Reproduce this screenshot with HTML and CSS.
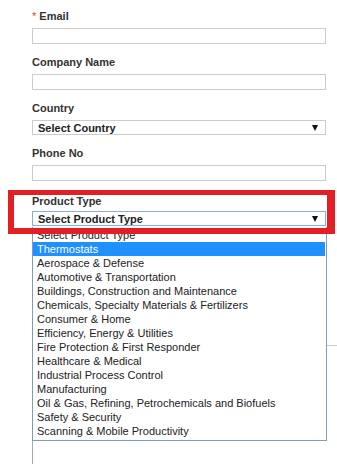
FILE: index.html
```html
<!DOCTYPE html>
<html>
<head>
<meta charset="utf-8">
<link rel="stylesheet" href="styles.css">
</head>
<body>
<form class="form">
  <div class="field">
    <div class="label"><span class="req">*</span> Email</div>
    <div class="input"></div>
  </div>
  <div class="field">
    <div class="label">Company Name</div>
    <div class="input"></div>
  </div>
  <div class="field">
    <div class="label">Country</div>
    <div class="select"><span>Select Country</span><span class="arrow"></span></div>
  </div>
  <div class="field">
    <div class="label">Phone No</div>
    <div class="input"></div>
  </div>
  <div class="field product">
    <div class="label">Product Type</div>
    <div class="select focused"><span>Select Product Type</span><span class="arrow"></span></div>
    <ul class="dropdown">
      <li>Select Product Type</li>
      <li class="active">Thermostats</li>
      <li>Aerospace &amp; Defense</li>
      <li>Automotive &amp; Transportation</li>
      <li>Buildings, Construction and Maintenance</li>
      <li>Chemicals, Specialty Materials &amp; Fertilizers</li>
      <li>Consumer &amp; Home</li>
      <li>Efficiency, Energy &amp; Utilities</li>
      <li>Fire Protection &amp; First Responder</li>
      <li>Healthcare &amp; Medical</li>
      <li>Industrial Process Control</li>
      <li>Manufacturing</li>
      <li>Oil &amp; Gas, Refining, Petrochemicals and Biofuels</li>
      <li>Safety &amp; Security</li>
      <li>Scanning &amp; Mobile Productivity</li>
    </ul>
    <div class="highlight"></div>
  </div>
  <div class="field">
    <div class="textarea"></div>
  </div>
</form>
</body>
</html>
```

FILE: styles.css
```css
html, body {
  margin: 0;
  padding: 0;
  background: #ffffff;
  overflow: hidden;
}
body {
  font-family: "Liberation Sans", Arial, sans-serif;
  color: #333333;
  width: 337px;
  height: 470px;
}
.form {
  padding: 9px 0 0 32px;
  display: flex;
  flex-direction: column;
  gap: 11px;
}
.field {
  display: flex;
  flex-direction: column;
  gap: 5px;
  width: 294px;
}
.label {
  font-size: 11px;
  font-weight: bold;
  line-height: 14px;
  height: 14px;
  color: #333333;
}
.product .label {
  padding-top: 2px;
  margin-bottom: -2px;
}
.req {
  color: #e0393e;
  font-weight: normal;
}
.input {
  box-sizing: border-box;
  height: 16px;
  border: 1px solid #cccccc;
  background: #fff;
}
.select {
  box-sizing: border-box;
  height: 15px;
  border: 1px solid #cccccc;
  background: #fff;
  display: flex;
  align-items: center;
  justify-content: space-between;
  padding: 0 7px 0 5px;
  font-size: 11px;
  font-weight: bold;
  color: #222;
}
.select.focused {
  border-color: #86aee0;
}
.arrow {
  width: 0;
  height: 0;
  border-left: 3.5px solid transparent;
  border-right: 3.5px solid transparent;
  border-top: 6px solid #111;
  margin-top: 1px;
}
.product {
  position: relative;
}
.dropdown {
  position: absolute;
  left: 0;
  top: 35px;
  width: 295px;
  box-sizing: border-box;
  margin: 0;
  padding: 1px 0 2px 0;
  list-style: none;
  background: #fff;
  border: 1px solid #7f9cc0;
  border-top: none;
  font-size: 11px;
  color: #222;
  z-index: 2;
}
.dropdown li {
  height: 14px;
  line-height: 14px;
  padding-left: 4px;
  white-space: nowrap;
}
.dropdown li.active {
  background: #1e90ff;
  color: #fff;
  margin: 0 1px 0 0;
}
.highlight {
  position: absolute;
  left: -24px;
  top: -2px;
  width: 327px;
  height: 44px;
  box-sizing: border-box;
  border: 6px solid #e31e25;
  border-top-width: 5px;
  border-right-width: 8px;
  z-index: 3;
}
.textarea {
  margin-top: 108px;
  box-sizing: border-box;
  width: 320px;
  height: 119px;
  border: 1px solid #aaaaaa;
  border-top-color: #cccccc;
  border-bottom: none;
}
```
